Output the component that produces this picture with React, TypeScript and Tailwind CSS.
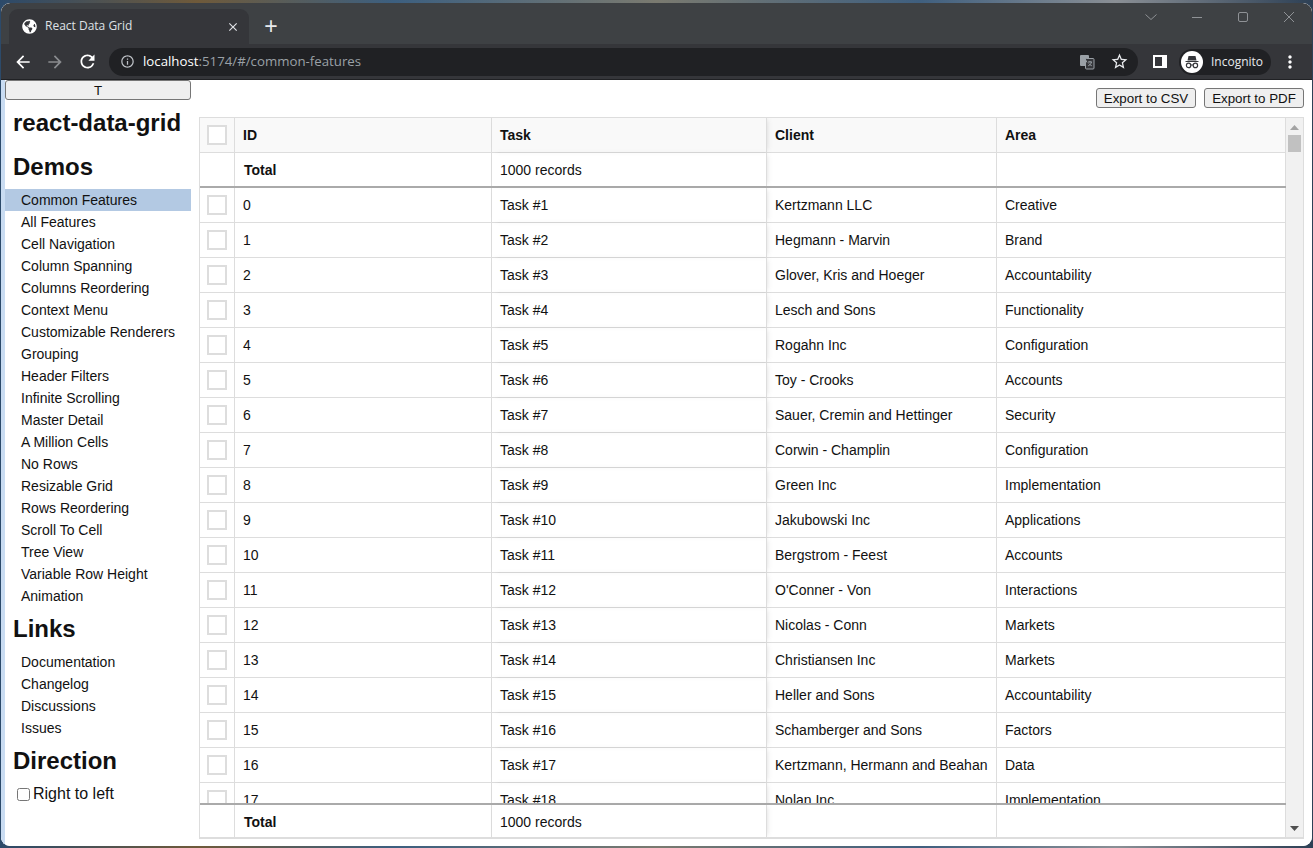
import React from "react";
import { FaGlobeAmericas } from "react-icons/fa";
import { MdArrowBack, MdArrowForward, MdClose, MdInfoOutline, MdMoreVert, MdRefresh, MdStarBorder } from "react-icons/md";

const demoLinks = [
  "Common Features",
  "All Features",
  "Cell Navigation",
  "Column Spanning",
  "Columns Reordering",
  "Context Menu",
  "Customizable Renderers",
  "Grouping",
  "Header Filters",
  "Infinite Scrolling",
  "Master Detail",
  "A Million Cells",
  "No Rows",
  "Resizable Grid",
  "Rows Reordering",
  "Scroll To Cell",
  "Tree View",
  "Variable Row Height",
  "Animation",
];

const otherLinks = ["Documentation", "Changelog", "Discussions", "Issues"];

const rows = [
  ["Kertzmann LLC", "Creative"],
  ["Hegmann - Marvin", "Brand"],
  ["Glover, Kris and Hoeger", "Accountability"],
  ["Lesch and Sons", "Functionality"],
  ["Rogahn Inc", "Configuration"],
  ["Toy - Crooks", "Accounts"],
  ["Sauer, Cremin and Hettinger", "Security"],
  ["Corwin - Champlin", "Configuration"],
  ["Green Inc", "Implementation"],
  ["Jakubowski Inc", "Applications"],
  ["Bergstrom - Feest", "Accounts"],
  ["O'Conner - Von", "Interactions"],
  ["Nicolas - Conn", "Markets"],
  ["Christiansen Inc", "Markets"],
  ["Heller and Sons", "Accountability"],
  ["Schamberger and Sons", "Factors"],
  ["Kertzmann, Hermann and Beahan", "Data"],
  ["Nolan Inc", "Implementation"],
];

const rowClass = "grid grid-cols-[35px_257px_275px_230px_289px] shrink-0";
const cellClass = "flex items-center px-2 border-r border-[#ddd] whitespace-nowrap overflow-hidden";
const summaryCellClass = "px-2 pt-[7px] border-r border-[#ddd] whitespace-nowrap overflow-hidden";
const frozenClass = "relative z-10 shadow-[2px_0_5px_-2px_rgba(136,136,136,0.3)]";
const buttonClass = "w-[100px] h-[20px] pt-[2px] bg-[#efefef] border border-[#767676] rounded-[3px] text-[13.33px] leading-none";

const CheckBox = () => <span className="block w-5 h-5 shrink-0 border-2 border-[#ddd] bg-white" />;

const Browser = () => (
  <div className="bg-[#3e4144] rounded-t-[9px] shrink-0">
    <div className="flex h-[41px] items-end pl-[8px] text-[#e8eaed]">
      <div className="flex items-center w-[240px] h-[35px] bg-[#35363a] rounded-t-[9px] pl-[13px] pr-[9px] text-[12px] font-['Open_Sans',sans-serif]">
        <FaGlobeAmericas className="w-[15px] h-[15px] text-white mr-[8px]" />
        <span className="text-[#dfe1e5] -mt-[2px]">React Data Grid</span>
        <MdClose className="w-[14px] h-[14px] ml-auto text-[#dfe1e5]" />
      </div>
      <div className="flex items-center justify-center w-[16px] h-[35px] ml-[14px] text-[23px] font-light text-[#e8eaed] font-['Liberation_Sans',sans-serif]">
        +
      </div>
      <div className="flex items-start h-full ml-auto pt-[7px] pr-[17px] gap-[34px] text-[#8f9296]">
        <svg width="14" height="14" viewBox="0 0 14 14" fill="none" stroke="currentColor" className="mr-[-1px]">
          <path d="M1.5 4.5 7 9.5l5.5-5" />
        </svg>
        <svg width="12" height="14" viewBox="0 0 12 14" fill="none" stroke="currentColor">
          <path d="M1 7.5h10" />
        </svg>
        <svg width="12" height="14" viewBox="0 0 12 14" fill="none" stroke="currentColor">
          <rect x="1.5" y="2.5" width="9" height="9" rx="1.5" />
        </svg>
        <svg width="12" height="14" viewBox="0 0 12 14" fill="none" stroke="currentColor">
          <path d="M1 2 11 12M11 2 1 12" />
        </svg>
      </div>
    </div>
    <div className="flex items-center h-[35px] bg-[#35363a] border-b border-[#202124] box-content pl-[12px] pr-[12px] text-white">
      <MdArrowBack className="w-[20px] h-[20px] mr-[12px]" />
      <MdArrowForward className="w-[20px] h-[20px] mr-[12px] text-[#8a8c8f]" />
      <MdRefresh className="w-[21px] h-[21px] mr-[11px]" />
      <div className="flex items-center flex-1 h-[28px] rounded-full bg-[#202124] pl-[11px] pr-[10px]">
        <MdInfoOutline className="w-[15px] h-[15px] text-[#bdc1c6] mr-[8px]" />
        <span className="text-[13.25px] font-['Open_Sans',sans-serif] text-[#9aa0a6]">
          <span className="text-white">localhost</span>:5174/#/common-features
        </span>
        <svg width="16" height="16" viewBox="0 0 16 16" className="ml-auto mr-[15px]">
          <rect x="1" y="1" width="9" height="11" rx="1" fill="#9aa0a6" />
          <rect x="6.5" y="4.5" width="8.5" height="10.5" rx="1" fill="#35363a" stroke="#9aa0a6" />
          <path d="M3 8.5 5.5 3.5 8 8.5M9 8h4M11 7v1M12.5 8c-.5 2-1.8 3.2-3.3 3.8M9.8 9.5c.7 1 1.8 1.8 3 2.3" fill="none" stroke="#9aa0a6" strokeWidth="1" />
        </svg>
        <MdStarBorder className="w-[19px] h-[19px] text-[#e8eaed] -mr-[1px]" />
      </div>
      <svg width="14" height="13" viewBox="0 0 14 13" className="ml-[15px] mr-[12px] shrink-0">
        <path fillRule="evenodd" d="M0 0h14v13H0zM2 2v9h7V2z" fill="#fff" />
      </svg>
      <div className="flex items-center h-[26px] w-[92px] rounded-full bg-[#202124] pl-[2px] text-[12px] text-[#e8eaed] font-['Open_Sans',sans-serif]">
        <svg width="22" height="22" viewBox="0 0 22 22" className="mr-[8px] shrink-0">
          <circle cx="11" cy="11" r="11" fill="#fff" />
          <path d="M7.5 5h7l1 4.5h-9zM4.5 10h13v1h-13z" fill="#35363a" />
          <circle cx="7.6" cy="14.4" r="2.2" fill="none" stroke="#35363a" strokeWidth="1.2" />
          <circle cx="14.4" cy="14.4" r="2.2" fill="none" stroke="#35363a" strokeWidth="1.2" />
          <path d="M9.8 14h2.4" stroke="#35363a" strokeWidth="1.2" />
        </svg>
        Incognito
      </div>
      <MdMoreVert className="w-[20px] h-[20px] ml-[9px] shrink-0" />
    </div>
  </div>
);

const Sidebar = () => (
  <aside className="w-[190px] shrink-0 border-l-4 border-[#c9dcf2] text-[14px] text-[#111]">
    <button className="block w-full h-[20px] pt-[2px] bg-[#efefef] border border-[#767676] rounded-[3px] text-[13.33px] leading-none">T</button>
    <h1 className="mt-[9px] ml-[8px] text-[24px] leading-[28px] font-bold whitespace-nowrap">react-data-grid</h1>
    <h1 className="mt-[16px] mb-[8px] ml-[8px] text-[24px] leading-[28px] font-bold">Demos</h1>
    <nav>
      {demoLinks.map((l, i) => (
        <div key={l} className={`h-[22px] leading-[22px] pl-4 whitespace-nowrap ${i === 0 ? "bg-[#b3c9e3]" : ""}`}>
          {l}
        </div>
      ))}
    </nav>
    <h1 className="mt-[8px] mb-[8px] ml-[8px] text-[24px] leading-[28px] font-bold">Links</h1>
    <nav>
      {otherLinks.map((l) => (
        <div key={l} className="h-[22px] leading-[22px] pl-4">
          {l}
        </div>
      ))}
    </nav>
    <h1 className="mt-[8px] ml-[8px] text-[24px] leading-[28px] font-bold">Direction</h1>
    <label className="flex items-center mt-[5px] ml-[12px] h-[28px] text-[16px]">
      <input type="checkbox" className="w-[13px] h-[13px] mr-[3px] appearance-auto" />
      Right to left
    </label>
  </aside>
);

const Grid = () => (
  <div className="flex w-[1105px] h-[722px] border border-[#ddd] border-b-2 text-[14px] text-[#111] overflow-hidden">
    <div className="flex flex-col w-[1086px] overflow-hidden">
      <div className={`${rowClass} h-[35px] bg-[#f9f9f9] border-b border-[#ddd] font-bold`}>
        <div className={`${cellClass} justify-center`}>
          <CheckBox />
        </div>
        <div className={cellClass}>ID</div>
        <div className={`${cellClass} ${frozenClass}`}>Task</div>
        <div className={cellClass}>Client</div>
        <div className={cellClass}>Area</div>
      </div>
      <div className={`${rowClass} h-[35px] border-b-2 border-[#aaa]`}>
        <div className={summaryCellClass} />
        <div className={`${summaryCellClass} font-bold`}>
          <span className="pl-px">Total</span>
        </div>
        <div className={`${summaryCellClass} ${frozenClass}`}>1000 records</div>
        <div className={summaryCellClass} />
        <div className={summaryCellClass} />
      </div>
      <div className="flex flex-col flex-1 min-h-0 overflow-hidden">
        {rows.map(([client, area], i) => (
          <div key={i} className={`${rowClass} h-[35px] border-b border-[#ddd]`}>
            <div className={`${cellClass} justify-center`}>
              <CheckBox />
            </div>
            <div className={cellClass}>{i}</div>
            <div className={`${cellClass} ${frozenClass}`}>Task #{i + 1}</div>
            <div className={cellClass}>{client}</div>
            <div className={cellClass}>{area}</div>
          </div>
        ))}
      </div>
      <div className={`${rowClass} h-[34px] border-t-2 border-[#aaa]`}>
        <div className={summaryCellClass} />
        <div className={`${summaryCellClass} font-bold`}>
          <span className="pl-px">Total</span>
        </div>
        <div className={`${summaryCellClass} ${frozenClass}`}>1000 records</div>
        <div className={summaryCellClass} />
        <div className={summaryCellClass} />
      </div>
    </div>
    <div className="flex flex-col items-center w-[17px] bg-[#f1f1f1]">
      <svg width="9" height="5" viewBox="0 0 9 5" className="mt-[7px]">
        <path d="M4.5 0 9 5H0z" fill="#a3a3a3" />
      </svg>
      <div className="w-[13px] h-[17px] mt-[5px] bg-[#c1c1c1]" />
      <svg width="9" height="5" viewBox="0 0 9 5" className="mt-auto mb-[6px]">
        <path d="M4.5 5 9 0H0z" fill="#505050" />
      </svg>
    </div>
  </div>
);

export default function App() {
  return (
    <div className="w-[1313px] h-[848px] overflow-hidden pt-[3px] bg-[linear-gradient(90deg,#2c4a6a_0%,#6f5a3a_15%,#3c5f80_30%,#7a7a70_50%,#3f5f7f_70%,#8a8f95_85%,#2d4055_100%)] font-['Liberation_Sans',Arial,sans-serif]">
      <div className="flex flex-col h-[843px] rounded-[9px] overflow-hidden bg-white mx-px">
        <Browser />
        <div className="flex flex-1 min-h-0 bg-white">
          <Sidebar />
          <main className="ml-[8px] pt-[8px]">
            <div className="flex justify-end gap-2 mb-[9px] w-[1105px] text-[#111]">
              <button className={buttonClass}>Export to CSV</button>
              <button className={buttonClass}>Export to PDF</button>
            </div>
            <Grid />
          </main>
        </div>
      </div>
    </div>
  );
}
